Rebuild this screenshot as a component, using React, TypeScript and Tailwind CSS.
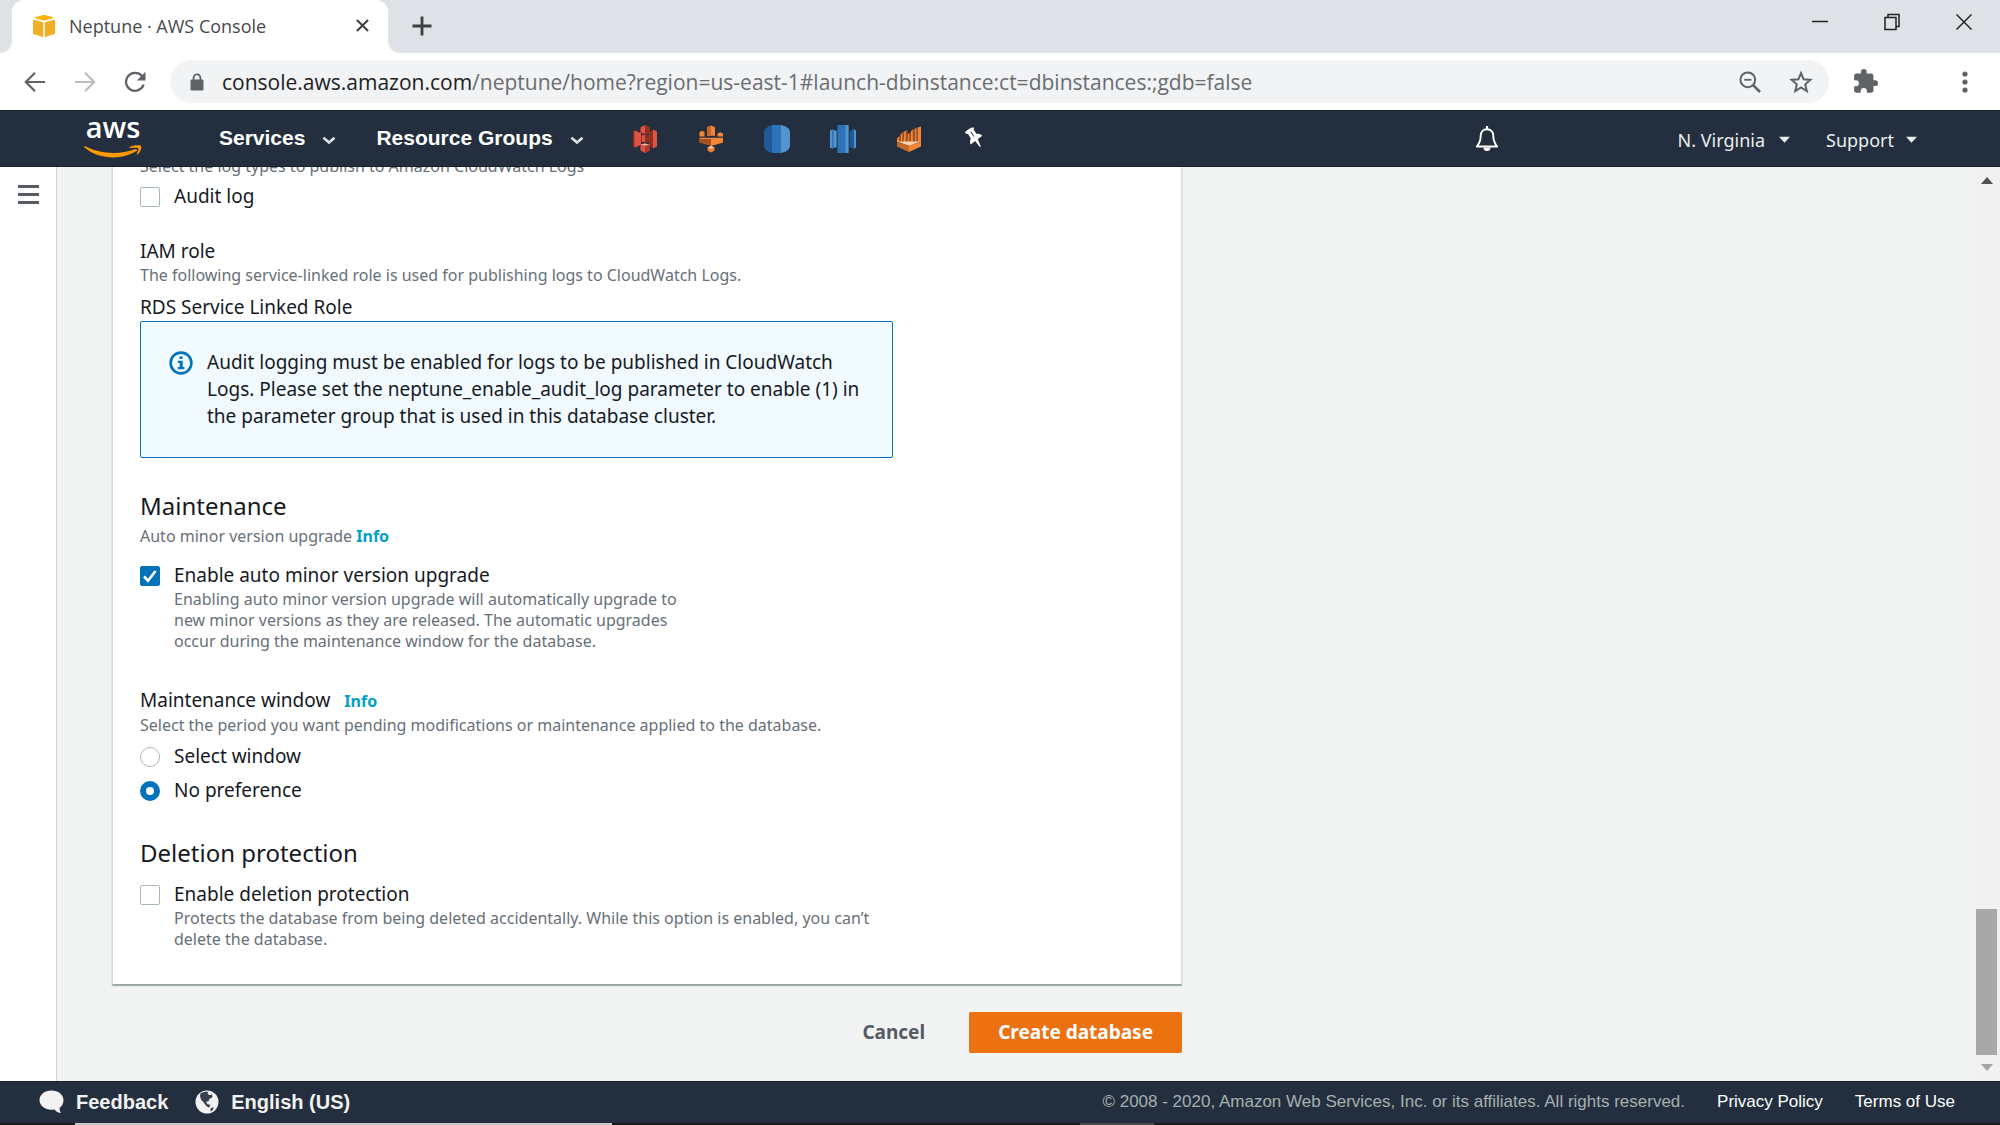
import React, { useState } from 'react';
import type { ReactNode } from 'react';

/* ---------- Icons ---------- */

function CubeIcon() {
  return (
    <svg width="24" height="24" viewBox="0 0 24 24" aria-hidden="true">
      <path d="M12 .8 22.500 3.800 12 6.800 1.500 3.800Z" fill="#fbb503" />
      <path d="M1 5.500 11.200 8.300V23.200L1 19.800Z" fill="#f2ae25" />
      <path d="M23 5.500 12.800 8.300v14.900L23 19.800Z" fill="#f2ae25" />
    </svg>
  );
}

function BackIcon({ flip = false }: { flip?: boolean }) {
  return (
    <svg
      width="22"
      height="22"
      viewBox="0 0 22 22"
      fill="none"
      stroke="currentColor"
      strokeWidth="2.2"
      className={flip ? 'rotate-180' : ''}
      aria-hidden="true"
    >
      <path d="M21 11H2.500M11 1.800 1.800 11 11 20.200" />
    </svg>
  );
}

function ReloadIcon() {
  return (
    <svg width="22" height="22" viewBox="0 0 22 22" aria-hidden="true">
      <path d="M18.200 5.400A9 9 0 1 0 19.600 13.500" fill="none" stroke="currentColor" strokeWidth="2.300" />
      <path d="M21.500.8v8.700h-8.700Z" fill="currentColor" />
    </svg>
  );
}

function LockIcon() {
  return (
    <svg width="14" height="18" viewBox="0 0 14 18" aria-hidden="true">
      <path d="M3.600 8V4.800a3.400 3.400 0 0 1 6.800 0V8" fill="none" stroke="#5f6368" strokeWidth="1.800" />
      <rect x="0.500" y="6.600" width="13" height="11" rx="1.400" fill="#5f6368" />
    </svg>
  );
}

function ZoomOutIcon() {
  return (
    <svg width="22" height="22" viewBox="0 0 22 22" fill="none" stroke="#5f6368" strokeWidth="2" aria-hidden="true">
      <circle cx="8.800" cy="8.800" r="7.400" />
      <path d="M14.200 14.200 21 21" strokeWidth="2.600" />
      <path d="M5.200 8.800h7.200" strokeWidth="1.800" />
    </svg>
  );
}

function StarIcon() {
  return (
    <svg width="24" height="24" viewBox="0 0 24 24" fill="none" stroke="#5f6368" strokeWidth="2" aria-hidden="true">
      <path d="m12 3 2.600 6.300 6.800.6-5.200 4.400 1.600 6.700-5.800-3.600L6.200 21l1.600-6.700L2.600 9.900l6.800-.6Z" />
    </svg>
  );
}

function PuzzleIcon() {
  return (
    <svg width="25" height="25" viewBox="1 1 22 22" fill="#5f6368" aria-hidden="true">
      <path d="M20.500 11H19V7c0-1.100-.9-2-2-2h-4V3.500a2.500 2.500 0 0 0-5 0V5H4c-1.100 0-2 .9-2 2v3.800h1.500a2.700 2.700 0 0 1 0 5.400H2V20c0 1.100.9 2 2 2h3.800v-1.500a2.700 2.700 0 0 1 5.400 0V22H17c1.100 0 2-.9 2-2v-4h1.500a2.500 2.500 0 0 0 0-5Z" />
    </svg>
  );
}

function BellIcon() {
  return (
    <svg width="24" height="26" viewBox="0 0 24 26" aria-hidden="true">
      <path
        d="M12 3.200c-4 0-6.300 2.900-6.300 6.600 0 5.400-1.300 7.600-3.900 10.700h20.400c-2.600-3.100-3.900-5.300-3.900-10.700 0-3.700-2.300-6.600-6.300-6.600Z"
        fill="none"
        stroke="#fff"
        strokeWidth="1.900"
        strokeLinejoin="round"
      />
      <path d="M12 .8v2.400" stroke="#fff" strokeWidth="2.200" strokeLinecap="round" />
      <path d="M8.500 21.500h7a3.500 3.500 0 0 1-7 0Z" fill="#fff" />
    </svg>
  );
}

function StorageIcon() {
  return (
    <svg width="24" height="28" viewBox="0 0 24 28" aria-hidden="true">
      <path d="M0 6.500 4 4.500v19L0 21.500Z" fill="#8c3123" />
      <path d="M1.500 5.800 8 8v12l-6.500 2.200Z" fill="#e05243" />
      <path d="M24 6.500 20 4.500v19l4-2Z" fill="#e05243" />
      <path d="M20 4.500 16 8v12l4 3.500Z" fill="#8c3123" />
      <path d="M12 0 7.500 2.200v5.500L12 9l4.500-1.300V2.200Z" fill="#e05243" />
      <path d="M12 0v9l4.500-1.300V2.200Z" fill="#8c3123" />
      <path d="M8 9.500h8v8H8Z" fill="#8c3123" />
      <path d="M9 10.800 12 10v7l-3-.6Z" fill="#e05243" />
      <path d="M12 18.500 7.500 19.500v6L12 28l4.500-2.500v-6Z" fill="#e05243" />
      <path d="M12 20v8l4.500-2.500v-6Z" fill="#b0392b" />
      <path d="M7.500 19.500 12 18.500l4.500 1L12 20.800Z" fill="#f2b0a9" />
    </svg>
  );
}

function MessagingIcon() {
  return (
    <svg width="26" height="28" viewBox="0 0 26 28" aria-hidden="true">
      <path d="M1 13h24v4.500L13 21 1 17.500Z" fill="#a5531e" />
      <path d="M13 13h12v4.500L13 21Z" fill="#f58536" />
      <path d="M9 2.200 13 .5l4 1.700v8.600H9Z" fill="#f58536" />
      <path d="M13 .5 9 2.200v8.600h4Z" fill="#c26a2c" />
      <path d="M1.500 7 4 5.800 6.500 7v4.500h-5Z" fill="#f58536" />
      <path d="M19.500 8.500 22.200 7.200 25 8.500v3h-5.500Z" fill="#f58536" />
      <path d="M1 12.800h24l-2 1.200H3Z" fill="#f58536" />
      <path d="M9.500 22.500 13 21l3.500 1.500v3L13 27.500l-3.500-2Z" fill="#f58536" />
      <path d="M9.500 22.500 13 21l3.500 1.500-3.500 1Z" fill="#fbcfa9" />
    </svg>
  );
}

function DatabaseIcon() {
  return (
    <svg width="26" height="28" viewBox="0 0 26 28" aria-hidden="true">
      <path d="M0 6.500C.8 3.500 4 .8 9 0v28c-5-.8-8.200-3.500-9-6.500Z" fill="#1f5b98" />
      <path d="M26 6.500C25.200 3.500 22 .8 17 0v28c5-.8 8.200-3.500 9-6.500Z" fill="#5294cf" />
      <path d="M8 0h9v28H8Z" fill="#2e73b8" />
    </svg>
  );
}

function WarehouseIcon() {
  return (
    <svg width="26" height="28" viewBox="0 0 26 28" aria-hidden="true">
      <path d="M0 5.500 3 4v20l-3-1.500Z" fill="#5294cf" />
      <path d="M2 4.500 6.500 6v16L2 23.500Z" fill="#2e73b8" />
      <path d="M3.500 5 6.500 6v16l-3 1Z" fill="#5294cf" />
      <path d="M26 5.500 23 4v20l3-1.500Z" fill="#5294cf" />
      <path d="M24 4.500 19.500 6v16l4.500 1.500Z" fill="#1f5b98" />
      <path d="M7.500 0h11v28h-11Z" fill="#2e73b8" />
      <path d="M15.500 0h3v28h-3Z" fill="#5294cf" />
    </svg>
  );
}

function AnalyticsIcon() {
  return (
    <svg width="26" height="26" viewBox="0 0 26 26" aria-hidden="true">
      <path
        d="M1 12.500 3.500 10V16H1ZM4.500 8.500 7 6v10H4.500ZM8 6l2.500-2v12H8ZM11.500 8.500 14 6.500V16h-2.500ZM15 5l2.500-2v13H15ZM18.500 3l2.500-1.500V16h-2.500ZM22 1.500l3-1V16h-3Z"
        fill="#f58536"
      />
      <path
        d="M3 10.500V16h1.500V10ZM6.200 6.500V16H8V6ZM9.800 4.500V16h1.700V4ZM13.200 7V16H15V6.500ZM16.800 3.500V16h1.700V3ZM20.200 2V16H22V1.500Z"
        fill="#9d5025"
      />
      <path d="M1 15.500h24L13 20Z" fill="#fbcfa9" />
      <path d="M1 16l12 3.500V26L1 20.500Z" fill="#c26a2c" />
      <path d="M25 16l-12 3.500V26l12-5.500Z" fill="#f58536" />
    </svg>
  );
}

function PinIcon() {
  return (
    <svg width="20" height="20" viewBox="0 0 20 20" aria-hidden="true">
      <path
        d="M1 5C3 3.200 6 .8 9.200.2c.9.400 1 1.500.4 2.200l3 4.600c1.800-.4 3.900.1 5.600 1.700l-4.400 3.500 3 7.200-1 .5-4.600-5.800-4.600 3.300c-.8-2-.7-4.200.2-6L3.900 6.800C2.600 7.200 1.200 6.500 1 5Z"
        fill="#fff"
      />
      <path d="m6.800 4.500 3 5" stroke="#232f3e" strokeWidth="1" />
    </svg>
  );
}

function ChevronIcon() {
  return (
    <svg width="14" height="9" viewBox="0 0 14 9" aria-hidden="true">
      <path d="M1.500 1.800 7 6.500l5.500-4.700" fill="none" stroke="#dfe2e5" strokeWidth="2.600" />
    </svg>
  );
}

function CaretIcon() {
  return (
    <svg width="11" height="7" viewBox="0 0 12 7" aria-hidden="true">
      <path d="M0 .5h12L6 7Z" fill="#eaeded" />
    </svg>
  );
}

function SmileIcon() {
  return (
    <svg width="58" height="14" viewBox="0 0 58 17" preserveAspectRatio="none" aria-hidden="true">
      <path
        d="M1.200 1.600C16 10.800 35 12.400 51 5.300c1.600-.7 3 1 1.400 2.100C38 18.600 15 18 .5 3 -.3 2.100.3 1.100 1.200 1.600Z"
        fill="#f90"
      />
      <path
        d="M45.500 2.600C48.500.4 53.500-.2 56.500.7c1.700.6.600 7.300-2.800 10.600-.7.500-1.200.2-.9-.6.800-2 2.200-5.700 1.600-6.700-.7-1-4.900-.7-8-.4-1.100.1-1.700-.4-.9-1Z"
        fill="#f90"
      />
    </svg>
  );
}

function InfoCircleIcon() {
  return (
    <svg width="24" height="24" viewBox="0 0 24 24" className="shrink-0" aria-hidden="true">
      <circle cx="12" cy="12" r="10.400" fill="none" stroke="#0073bb" strokeWidth="2.600" />
      <path d="M10.400 5.500h3.200v2.600h-3.200ZM8.800 9.800h4.900v6.300h1.700v2.200H8.800v-2.200h1.900v-4.100H8.800Z" fill="#0073bb" />
    </svg>
  );
}

function SpeechIcon() {
  return (
    <svg width="25" height="24" viewBox="0 0 26 24" aria-hidden="true">
      <path
        d="M13 0C5.800 0 .5 4.300.5 10S5.800 20 13 20c1.100 0 2.200-.1 3.200-.3 1.600 2.200 4 3.700 6.600 3.800-1.100-1.600-1.500-3.500-1.300-5.500 2.500-1.800 4-4.700 4-8C25.500 4.300 20.200 0 13 0Z"
        fill="#f2f2f2"
      />
    </svg>
  );
}

function GlobeIcon() {
  return (
    <svg width="24" height="24" viewBox="0 0 24 24" aria-hidden="true">
      <circle cx="12" cy="12" r="11.500" fill="#f2f2f2" />
      <path
        d="M5.500 3.500C8 2 11 1.500 13.500 2l-1 2 2.500 1.200 2-1 .5 3-3 1.500-1 2.500-2.500.5 1.500 2.500 3 .5-1.500 3-3-2-2.500-3.500L6 9.500 5 6Z"
        fill="#37414d"
      />
      <path d="M15.500 18.500 18.500 17l-.5 3-2.500 1.500Z" fill="#37414d" />
    </svg>
  );
}

/* ---------- Form pieces ---------- */

function Info() {
  return (
    <a href="#info" className="text-base leading-[21px] font-bold text-[#00a1c9]">
      Info
    </a>
  );
}

function Hint({ children }: { children: ReactNode }) {
  return <p className="text-base leading-[21px] text-[#687078]">{children}</p>;
}

interface ChoiceProps {
  id: string;
  type: 'checkbox' | 'radio';
  name?: string;
  label: string;
  checked: boolean;
  onChange: (checked: boolean) => void;
  children?: ReactNode;
}

function Choice({ id, type, name, label, checked, onChange, children }: ChoiceProps) {
  return (
    <div className="flex gap-3.5">
      <span className="grid h-7 shrink-0 items-center">
        <input
          id={id}
          type={type}
          name={name}
          checked={checked}
          onChange={(e) => onChange(e.target.checked)}
          className={
            type === 'radio'
              ? 'col-start-1 row-start-1 size-5 appearance-none rounded-full border border-[#aab7b8] bg-white checked:border-[6px] checked:border-[#0073bb]'
              : 'peer col-start-1 row-start-1 size-5 appearance-none rounded-xs border border-[#aab7b8] bg-white checked:border-[#0073bb] checked:bg-[#0073bb]'
          }
        />
        {type === 'checkbox' && (
          <svg
            viewBox="0 0 20 20"
            className="pointer-events-none invisible col-start-1 row-start-1 size-5 peer-checked:visible"
            aria-hidden="true"
          >
            <path d="m4 10.500 4 4.200 7.500-9.700" fill="none" stroke="#fff" strokeWidth="2.600" />
          </svg>
        )}
      </span>
      <div>
        <label htmlFor={id} className="block">
          {label}
        </label>
        {children}
      </div>
    </div>
  );
}

/* ---------- Browser frame ---------- */

function TabStrip() {
  return (
    <div className="flex h-[53px] shrink-0 items-stretch bg-[#dee1e6] font-['Open_Sans',sans-serif]">
      <span className="flex w-3 bg-[linear-gradient(#dee1e6_50%,#fff_50%)]">
        <span className="size-full rounded-br-xl bg-[#dee1e6]" />
      </span>
      <div className="flex w-[376px] items-center rounded-t-xl bg-white pr-3.5 pb-0.5 pl-5">
        <CubeIcon />
        <span className="ml-[13px] flex-1 text-lg text-[#45494d]">Neptune · AWS Console</span>
        <button type="button" aria-label="Close tab" className="grid size-6 place-items-center">
          <svg width="13" height="13" viewBox="0 0 14 14" stroke="#3c4043" strokeWidth="2.200" aria-hidden="true">
            <path d="m1 1 12 12M13 1 1 13" />
          </svg>
        </button>
      </div>
      <span className="flex w-3 bg-[linear-gradient(#dee1e6_50%,#fff_50%)]">
        <span className="size-full rounded-bl-xl bg-[#dee1e6]" />
      </span>
      <button type="button" aria-label="New tab" className="ml-2.5 grid w-6 place-items-center pb-0.5">
        <svg width="20" height="20" viewBox="0 0 20 20" stroke="#3c4043" strokeWidth="2.800" aria-hidden="true">
          <path d="M10 .5v19M.5 10h19" />
        </svg>
      </button>
      <div className="ml-auto flex h-11 items-center gap-14 pr-7">
        <button type="button" aria-label="Minimize">
          <svg width="16" height="18" viewBox="0 0 16 18" stroke="#222" strokeWidth="1.500" aria-hidden="true">
            <path d="M0 8.500h16" />
          </svg>
        </button>
        <button type="button" aria-label="Restore">
          <svg width="16" height="18" viewBox="0 0 16 18" fill="none" stroke="#222" strokeWidth="1.500" aria-hidden="true">
            <path d="M1 4.500h11v12H1ZM4 4.500v-3h11v12h-3" />
          </svg>
        </button>
        <button type="button" aria-label="Close window">
          <svg width="16" height="18" viewBox="0 0 16 18" stroke="#222" strokeWidth="1.500" aria-hidden="true">
            <path d="m.5 1.500 15 15M15.500 1.500l-15 15" />
          </svg>
        </button>
      </div>
    </div>
  );
}

function AddressBar() {
  return (
    <div className="flex h-[57px] shrink-0 items-center bg-white pr-8 pl-6 font-['Open_Sans',sans-serif]">
      <button type="button" aria-label="Back" className="text-[#5f6368]">
        <BackIcon />
      </button>
      <button type="button" aria-label="Forward" className="ml-7 text-[#babcbe]">
        <BackIcon flip />
      </button>
      <button type="button" aria-label="Reload" className="ml-7 text-[#5f6368]">
        <ReloadIcon />
      </button>
      <div className="ml-6 flex h-[43px] flex-1 items-center rounded-full bg-[#f1f3f4] pr-4 pl-5">
        <LockIcon />
        <p className="ml-[18px] flex-1 text-[21px] leading-7 text-[#6a6d71]">
          <span className="text-[#202124]">console.aws.amazon.com</span>
          /neptune/home?region=us-east-1#launch-dbinstance:ct=dbinstances:;gdb=false
        </p>
        <button type="button" aria-label="Zoom">
          <ZoomOutIcon />
        </button>
        <button type="button" aria-label="Bookmark" className="ml-7">
          <StarIcon />
        </button>
      </div>
      <button type="button" aria-label="Extensions" className="ml-6">
        <PuzzleIcon />
      </button>
      <button type="button" aria-label="Menu" className="ml-[84px]">
        <svg width="6" height="22" viewBox="0 0 6 22" fill="#5f6368" aria-hidden="true">
          <circle cx="3" cy="3" r="2.600" />
          <circle cx="3" cy="11" r="2.600" />
          <circle cx="3" cy="19" r="2.600" />
        </svg>
      </button>
    </div>
  );
}

/* ---------- Console ---------- */

const shortcuts = [
  { name: 'S3', Icon: StorageIcon },
  { name: 'IoT', Icon: MessagingIcon },
  { name: 'RDS', Icon: DatabaseIcon },
  { name: 'Redshift', Icon: WarehouseIcon },
  { name: 'EMR', Icon: AnalyticsIcon },
];

function ConsoleNav() {
  return (
    <header className="flex h-[57px] shrink-0 items-center border-y border-[#17202c] bg-[#232f3e] pr-[83px] pl-[84px] text-white">
      <a
        href="#home"
        aria-label="AWS home"
        className="flex w-[58px] flex-col items-center pb-1 font-['Open_Sans',sans-serif]"
      >
        <span className="text-[29px] leading-6 font-semibold">aws</span>
        <span className="pt-1.5">
          <SmileIcon />
        </span>
      </a>
      <nav className="flex items-center pb-0.5 font-['Liberation_Sans',Arial,sans-serif] text-[21px] leading-6 font-bold">
        <button type="button" className="ml-[77px] flex items-center gap-[17px]">
          Services
          <span className="pt-1.5">
            <ChevronIcon />
          </span>
        </button>
        <button type="button" className="ml-10 flex items-center gap-[17px]">
          Resource Groups
          <span className="pt-1.5">
            <ChevronIcon />
          </span>
        </button>
      </nav>
      <div className="ml-12 flex items-center gap-10">
        {shortcuts.map(({ name, Icon }) => (
          <a key={name} href={'#' + name} aria-label={name} className="flex w-[26px] justify-center">
            <Icon />
          </a>
        ))}
        <button type="button" aria-label="Edit shortcuts" className="ml-0.5 pb-1">
          <PinIcon />
        </button>
      </div>
      <button type="button" aria-label="Notifications" className="ml-auto">
        <BellIcon />
      </button>
      <div className="ml-[179px] flex gap-9 pt-0.5 text-lg leading-6 text-[#eaeded]">
        <button type="button" className="flex items-center gap-3.5">
          N. Virginia
          <CaretIcon />
        </button>
        <button type="button" className="flex items-center gap-3">
          Support
          <CaretIcon />
        </button>
      </div>
    </header>
  );
}

function DatabaseForm() {
  const [auditLog, setAuditLog] = useState(false);
  const [autoUpgrade, setAutoUpgrade] = useState(true);
  const [windowChoice, setWindowChoice] = useState('none');
  const [protect, setProtect] = useState(false);

  return (
    <form className="w-full max-w-[1070px]" onSubmit={(e) => e.preventDefault()}>
      <div className="border border-t-0 border-[#d5dbdb] border-b-[#95a5a6] bg-white px-[27px] pt-6 pb-[34px] shadow-[0_1px_1px_rgba(0,28,36,0.3)]">
        <section>
          <Hint>Select the log types to publish to Amazon CloudWatch Logs</Hint>
          <div className="mt-1.5">
            <Choice id="audit-log" type="checkbox" label="Audit log" checked={auditLog} onChange={setAuditLog} />
          </div>
          <h3 className="mt-[27px]">IAM role</h3>
          <Hint>The following service-linked role is used for publishing logs to CloudWatch Logs.</Hint>
          <p className="mt-2">RDS Service Linked Role</p>
          <div className="flex max-w-[753px] gap-3.5 rounded-xs border border-[#0073bb] bg-[#f1faff] py-[27px] pr-6 pl-7">
            <span className="pt-0.5">
              <InfoCircleIcon />
            </span>
            <p>
              Audit logging must be enabled for logs to be published in CloudWatch Logs. Please set the
              neptune_enable_audit_log parameter to enable (1) in the parameter group that is used in this database
              cluster.
            </p>
          </div>
        </section>

        <section className="mt-8">
          <h2 className="text-2xl leading-8">Maintenance</h2>
          <div className="mt-1">
            <Hint>
              Auto minor version upgrade <Info />
            </Hint>
          </div>
          <div className="mt-[15px]">
            <Choice
              id="auto-upgrade"
              type="checkbox"
              label="Enable auto minor version upgrade"
              checked={autoUpgrade}
              onChange={setAutoUpgrade}
            >
              <div className="max-w-[530px]">
                <Hint>
                  Enabling auto minor version upgrade will automatically upgrade to new minor versions as they are
                  released. The automatic upgrades occur during the maintenance window for the database.
                </Hint>
              </div>
            </Choice>
          </div>
        </section>

        <fieldset className="mt-[35px]">
          <legend className="mb-px flex items-baseline gap-3.5">
            Maintenance window <Info />
          </legend>
          <Hint>Select the period you want pending modifications or maintenance applied to the database.</Hint>
          <div className="mt-[7px] flex flex-col gap-1.5">
            <Choice
              id="select-window"
              type="radio"
              name="window"
              label="Select window"
              checked={windowChoice === 'select'}
              onChange={() => setWindowChoice('select')}
            />
            <Choice
              id="no-preference"
              type="radio"
              name="window"
              label="No preference"
              checked={windowChoice === 'none'}
              onChange={() => setWindowChoice('none')}
            />
          </div>
        </fieldset>

        <section className="mt-8">
          <h2 className="text-2xl leading-8">Deletion protection</h2>
          <div className="mt-3">
            <Choice
              id="deletion-protection"
              type="checkbox"
              label="Enable deletion protection"
              checked={protect}
              onChange={setProtect}
            >
              <div className="max-w-[720px]">
                <Hint>
                  Protects the database from being deleted accidentally. While this option is enabled, you can’t delete
                  the database.
                </Hint>
              </div>
            </Choice>
          </div>
        </section>
      </div>

      <div className="mt-[27px] mb-7 flex justify-end gap-3.5 font-bold">
        <button type="button" className="px-[30px] text-[#545b64]">
          Cancel
        </button>
        <button type="submit" className="h-[41px] rounded-xs bg-[#ec7211] px-[29px] text-white">
          Create database
        </button>
      </div>
    </form>
  );
}

function ScrollTrack() {
  return (
    <div className="flex w-[25px] shrink-0 flex-col items-center bg-[#f1f1f1] pt-2.5 pr-0.5 pb-2.5" aria-hidden="true">
      <svg width="12" height="7" viewBox="0 0 12 7">
        <path d="M0 7h12L6 0Z" fill="#505050" />
      </svg>
      <span className="mt-auto mb-[9px] h-[146px] w-[21px] bg-[#a8a8a8]" />
      <svg width="12" height="7" viewBox="0 0 12 7">
        <path d="M0 0h12L6 7Z" fill="#a3a3a3" />
      </svg>
    </div>
  );
}

function Footer() {
  return (
    <footer className="flex h-[42px] shrink-0 items-center border-t border-[#17202c] bg-[#232f3e] pr-[45px] pb-0.5 pl-[39px] font-['Liberation_Sans',Arial,sans-serif] text-[17px] text-white">
      <button type="button" className="flex items-center gap-3 text-xl font-bold text-[#f2f2f2]">
        <SpeechIcon />
        Feedback
      </button>
      <button type="button" className="ml-[27px] flex items-center gap-3 text-xl font-bold text-[#f2f2f2]">
        <GlobeIcon />
        English (US)
      </button>
      <p className="ml-auto text-[#a5b0b0]">
        © 2008 - 2020, Amazon Web Services, Inc. or its affiliates. All rights reserved.
      </p>
      <a href="#privacy" className="ml-8">
        Privacy Policy
      </a>
      <a href="#terms" className="ml-8">
        Terms of Use
      </a>
    </footer>
  );
}

export default function App() {
  return (
    <div className="flex h-screen flex-col overflow-hidden bg-[#f2f3f3] font-['Noto_Sans','Open_Sans',sans-serif] text-[19px] leading-[27px] text-[#16191f]">
      <TabStrip />
      <AddressBar />
      <ConsoleNav />
      <div className="flex min-h-0 flex-1">
        <aside className="w-[57px] shrink-0 border-r border-[#d0d4d4] bg-white pt-[18px]">
          <button type="button" aria-label="Open navigation" className="mx-auto block w-[21px]">
            <svg width="21" height="19" viewBox="0 0 21 19" stroke="#545b64" strokeWidth="3" aria-hidden="true">
              <path d="M0 1.500h21M0 9.500h21M0 17.500h21" />
            </svg>
          </button>
        </aside>
        <main className="flex min-h-0 flex-1 flex-col justify-end overflow-hidden pl-[55px]">
          <DatabaseForm />
        </main>
        <ScrollTrack />
      </div>
      <Footer />
      <div className="flex h-0.5 shrink-0 bg-[#1b1b1b] pl-[75px]">
        <span className="w-[537px] bg-[#c8c8c8]" />
        <span className="ml-[468px] w-[74px] bg-[#4a4a4a]" />
      </div>
    </div>
  );
}
